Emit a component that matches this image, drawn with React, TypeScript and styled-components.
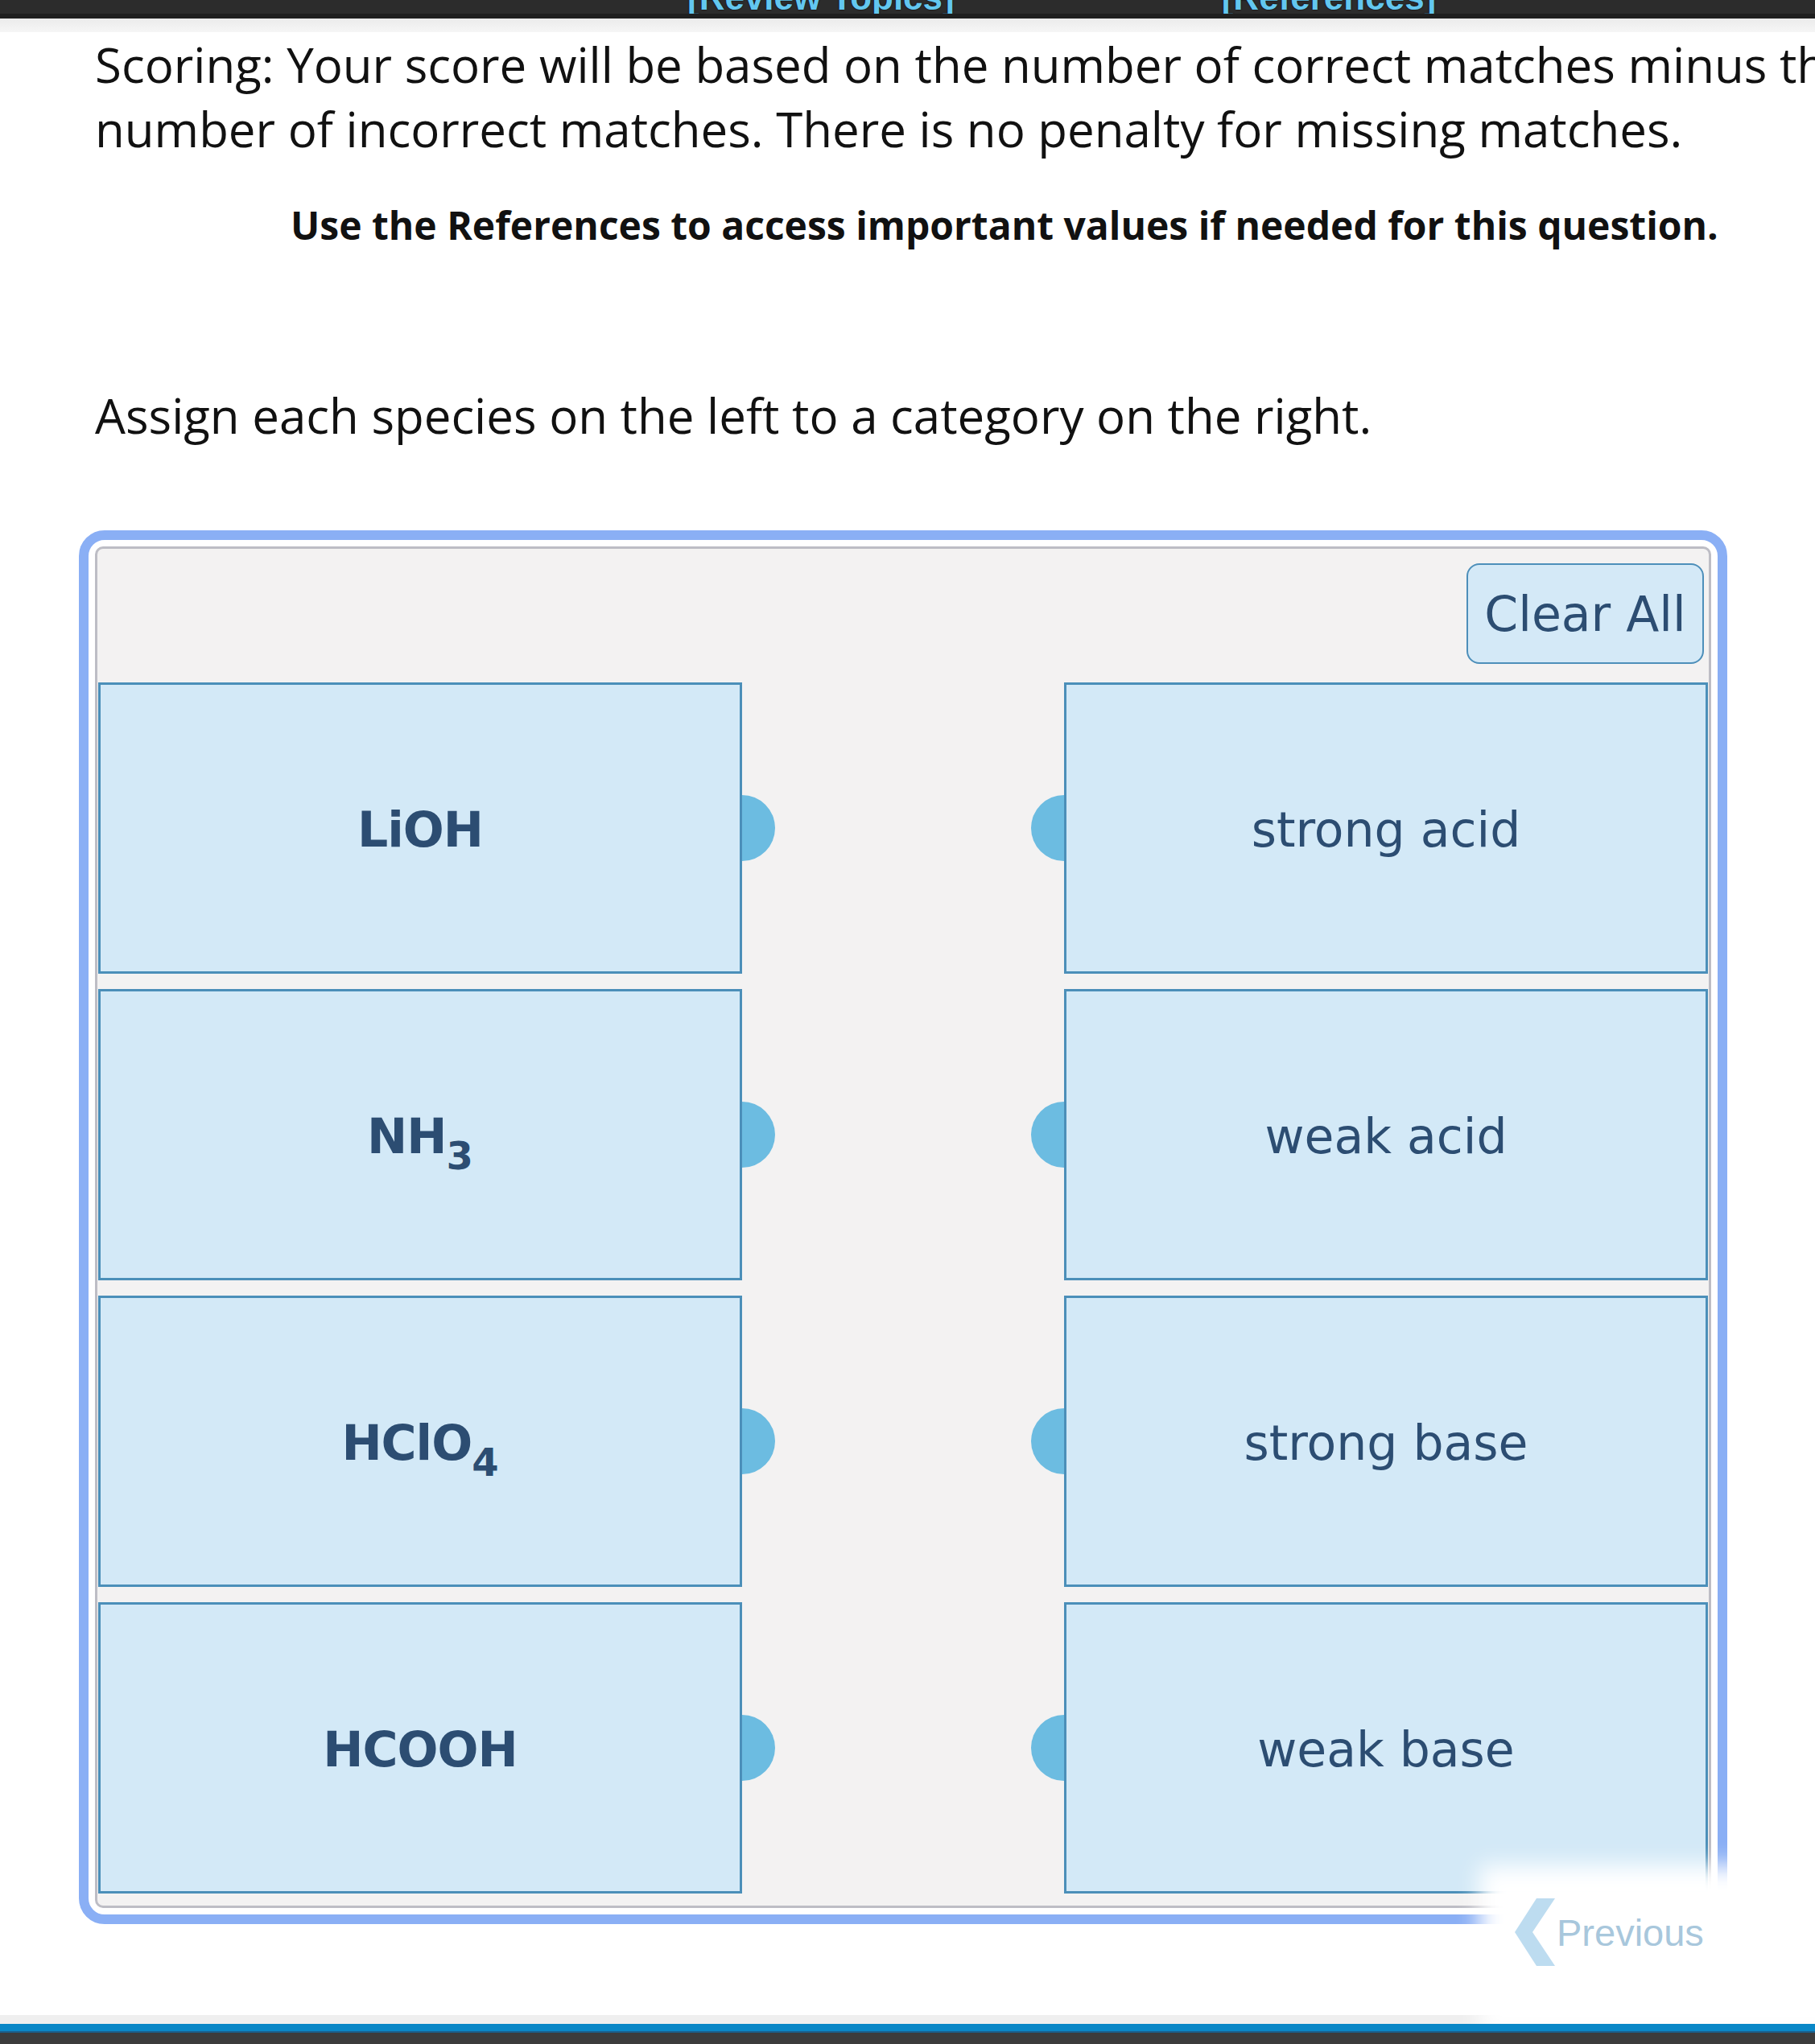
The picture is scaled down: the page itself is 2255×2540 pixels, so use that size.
import React from 'react'
import styled, { createGlobalStyle } from 'styled-components'

const GlobalStyle = createGlobalStyle`
html, body {
  margin: 0;
  padding: 0;
  background: #fff;
  overflow: hidden;
}
`;

const Page = styled.div`
position: relative;
width: 2255px;
height: 2540px;
overflow: hidden;
display: flex;
flex-direction: column;
background: #fff;
`;

const TopBar = styled.div`
height: 17px;
background: #2c2c2c;
border-bottom: 6px solid #1f1f1f;
overflow: hidden;
display: flex;
align-items: flex-start;
padding-left: 854px;
`;

type TopLinkProps = {
  gap?: number;
}

const TopLink = styled.span`
display: block;
margin-top: -25px;
margin-left: ${({ gap = 0 }: TopLinkProps) => `${gap}px`};
font-family: "Liberation Sans", Arial, sans-serif;
font-weight: bold;
font-size: 44px;
line-height: 44px;
color: #63c7ef;
text-shadow: 0 0 2px #000;
white-space: nowrap;
`;

const GreyStrip = styled.div`
height: 17px;
background: linear-gradient(#ebebeb, #f6f6f6);
`;

const Content = styled.div`
padding-left: 118px;
font-family: "Open Sans", "Noto Sans", sans-serif;
color: #111;
`;

const Scoring = styled.p`
margin: 0;
font-size: 60px;
line-height: 80px;
white-space: nowrap;
`;

const Notice = styled.p`
margin: 49px 0 0;
padding-left: 243px;
font-size: 48px;
font-weight: 700;
line-height: 62px;
white-space: nowrap;
`;

const Instruction = styled.p`
margin: 165px 0 0;
font-size: 60px;
line-height: 80px;
white-space: nowrap;
`;

const MatchFrame = styled.div`
margin: 103px 0 0 -20px;
width: 2008px;
border: 12px solid #8aaff5;
border-radius: 32px;
padding: 8px;
background: #fff;
`;

const MatchPanel = styled.div`
border: 3px solid #bdbdc5;
border-radius: 10px;
background: #f3f2f2;
padding: 0 1px 15px;
`;

const Toolbar = styled.div`
display: flex;
justify-content: flex-end;
padding: 18px 5px 0 0;
`;

const ClearButton = styled.button`
box-sizing: border-box;
width: 295px;
height: 125px;
border: 2px solid #4d8fba;
border-radius: 16px;
background: #d4e9f7;
color: #2c4d72;
font-family: "DejaVu Sans", Verdana, sans-serif;
font-size: 60px;
padding: 0;
cursor: pointer;
`;

const CardGrid = styled.div`
margin-top: 23px;
display: grid;
grid-template-columns: 800px 800px;
grid-auto-rows: 362px;
column-gap: 400px;
row-gap: 19px;
`;

type CardProps = {
  $side: 'left' | 'right';
}

const Card = styled.div`
box-sizing: border-box;
position: relative;
display: flex;
align-items: center;
justify-content: center;
padding-top: 4px;
border: 3px solid #4b8fb9;
background: #d3e9f7;
color: #2c4d72;
font-family: "DejaVu Sans", Verdana, sans-serif;
font-size: 60px;
font-weight: ${({ $side }: CardProps) => ($side === 'left' ? 700 : 400)};
letter-spacing: ${({ $side }: CardProps) => ($side === 'left' ? '-1px' : '0')};
`;

const Label = styled.span`
white-space: nowrap;
`;

const Knob = styled.span`
position: absolute;
top: 50%;
margin-top: -41px;
width: 41px;
height: 82px;
background: #6cbce1;
${({ $side }: CardProps) =>
  $side === 'left'
    ? 'left: calc(100% + 3px); border-radius: 0 41px 41px 0;'
    : 'right: calc(100% + 3px); border-radius: 41px 0 0 41px;'}
`;

const Sub = styled.span`
font-size: 48px;
line-height: 0;
vertical-align: -20px;
letter-spacing: 0;
`;

const Glow = styled.div`
position: absolute;
left: 1838px;
top: 2318px;
width: 520px;
height: 210px;
background: #fff;
filter: blur(14px);
z-index: 2;
`;

const PrevNav = styled.div`
position: absolute;
left: 1882px;
top: 2359px;
z-index: 3;
display: flex;
align-items: center;
gap: 2px;
font-family: "Liberation Sans", Arial, sans-serif;
font-size: 47px;
line-height: 47px;
color: #a8c7dc;
`;

const Footer = styled.div`
margin-top: auto;
`;

const FooterFade = styled.div`
height: 11px;
background: #efefef;
`;

const FooterBar = styled.div`
position: relative;
z-index: 3;
height: 16px;
background: #3c3c3c;
border-top: 9px solid #0a87c7;
box-shadow: inset 0 2px 0 #1b5f8c;
`;

const species = [
  { key: 'lioh', label: <>LiOH</> },
  { key: 'nh3', label: <>NH<Sub>3</Sub></> },
  { key: 'hclo4', label: <>HClO<Sub>4</Sub></> },
  { key: 'hcooh', label: <>HCOOH</> },
];

const categories = ['strong acid', 'weak acid', 'strong base', 'weak base'];

const Chevron = () => (
  <svg width="50" height="84" viewBox="0 0 50 84">
    <polygon points="27,0 50,0 22,42 50,84 27,84 0,42" fill="#bddcf0" />
  </svg>
)

export default function App() {
  return (
    <Page>
      <GlobalStyle />
      <TopBar>
        <TopLink>[Review Topics]</TopLink>
        <TopLink gap={332}>[References]</TopLink>
      </TopBar>
      <GreyStrip />
      <Content>
        <Scoring>
          Scoring: Your score will be based on the number of correct matches minus the
          <br />
          number of incorrect matches. There is no penalty for missing matches.
        </Scoring>
        <Notice>Use the References to access important values if needed for this question.</Notice>
        <Instruction>Assign each species on the left to a category on the right.</Instruction>
        <MatchFrame>
          <MatchPanel>
            <Toolbar>
              <ClearButton>Clear All</ClearButton>
            </Toolbar>
            <CardGrid>
              {species.map((s, i) => (
                <React.Fragment key={s.key}>
                  <Card $side="left">
                    <Label>{s.label}</Label>
                    <Knob $side="left" />
                  </Card>
                  <Card $side="right">
                    <Label>{categories[i]}</Label>
                    <Knob $side="right" />
                  </Card>
                </React.Fragment>
              ))}
            </CardGrid>
          </MatchPanel>
        </MatchFrame>
      </Content>
      <Glow />
      <PrevNav>
        <Chevron />
        <span>Previous</span>
      </PrevNav>
      <Footer>
        <FooterFade />
        <FooterBar />
      </Footer>
    </Page>
  )
}
